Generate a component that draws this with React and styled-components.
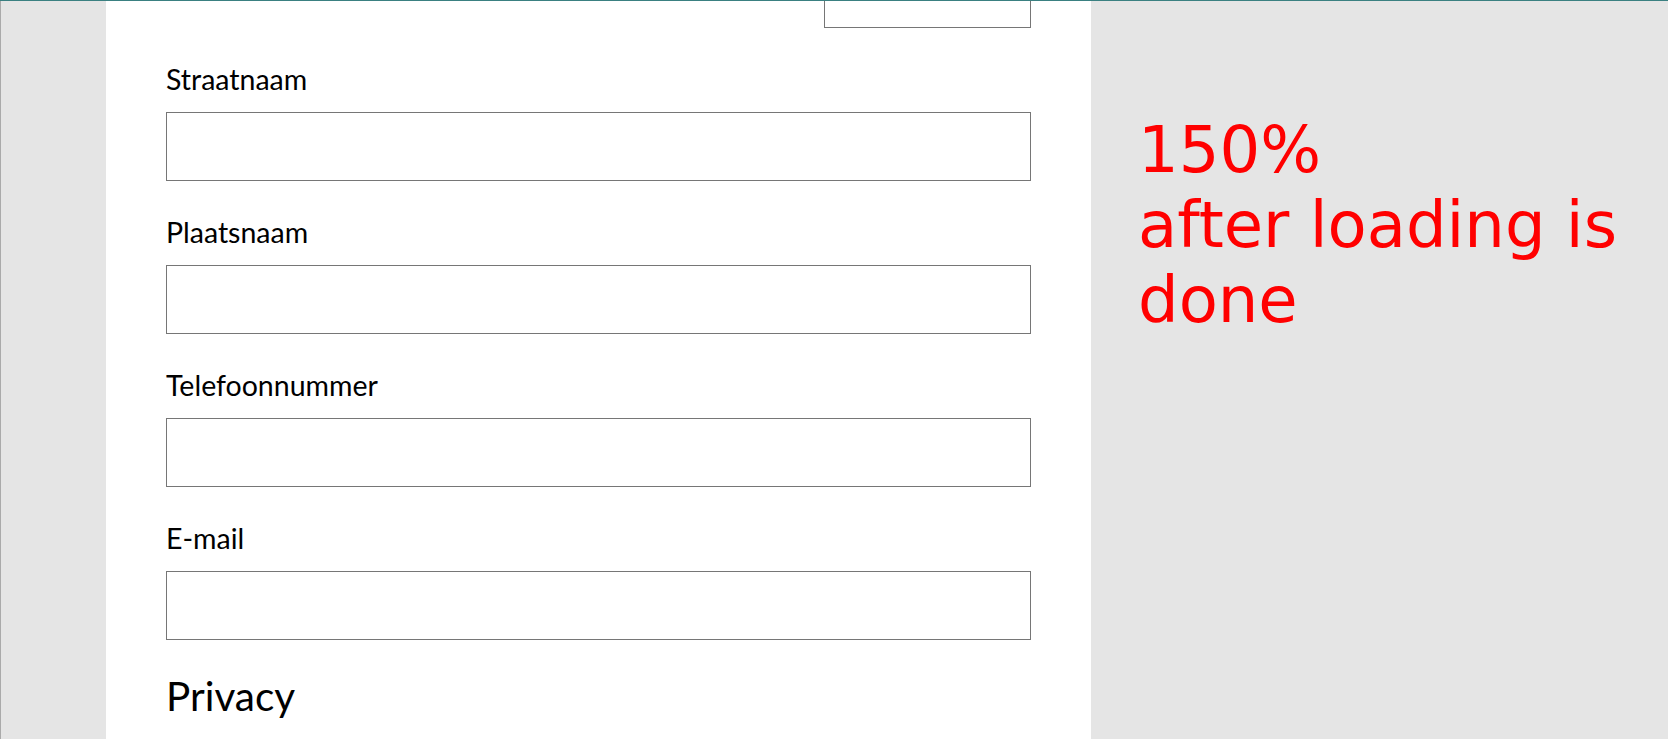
import React from 'react';
import styled, { createGlobalStyle } from 'styled-components';

const GlobalStyle = createGlobalStyle`
    html, body {
        margin: 0;
        padding: 0;
        height: 100%;
        overflow: hidden;
        background: #e5e5e5;
    }
`;

const Page = styled.div`
    display: flex;
    height: 100vh;
    box-sizing: border-box;
    border-top: 1px solid #3a8081;
    background: #e5e5e5;
`;

const Gutter = styled.div`
    width: 105px;
    flex-shrink: 0;
    border-left: 1px solid #aaaaaa;
`;

const Panel = styled.main`
    width: 985px;
    flex-shrink: 0;
    box-sizing: border-box;
    padding: 0 60px;
    background: #fff;
    overflow: hidden;
    font-family: Lato, "Noto Sans", sans-serif;
    color: #000;
`;

const Form = styled.form`
    display: flex;
    flex-direction: column;
    margin-top: -42px;
`;

const Field = styled.div`
    display: flex;
    flex-direction: column;
    align-items: ${(p) => (p.small ? 'flex-end' : 'stretch')};
    margin-bottom: 30px;
`;

const Label = styled.label`
    display: block;
    font-size: 28.5px;
    line-height: 42px;
    margin-bottom: 12px;
`;

const Input = styled.input`
    display: block;
    box-sizing: border-box;
    width: ${(p) => (p.small ? '207px' : '100%')};
    height: 69px;
    margin: 0;
    border: 1px solid #767676;
    border-radius: 0;
    background: #fff;
    outline: none;
`;

const Heading = styled.h2`
    margin: 2px 0 0;
    font-size: 40.5px;
    font-weight: 400;
    line-height: 48px;
`;

const Aside = styled.aside`
    flex: 1;
    box-sizing: border-box;
    padding: 112px 30px 0 47px;
`;

const Notice = styled.p`
    margin: 0;
    font-family: "DejaVu Sans", sans-serif;
    font-size: 64px;
    line-height: 75px;
    color: #ff0000;
`;

const fields = ['Straatnaam', 'Plaatsnaam', 'Telefoonnummer', 'E-mail'];

const App = () => (
    <>
        <GlobalStyle />
        <Page>
            <Gutter />
            <Panel>
                <Form>
                    <Field small>
                        <Input small type="text" />
                    </Field>
                    {fields.map((name) => (
                        <Field key={name}>
                            <Label>{name}</Label>
                            <Input type="text" />
                        </Field>
                    ))}
                    <Heading>{'Privacy'}</Heading>
                </Form>
            </Panel>
            <Aside>
                <Notice>
                    {'150%'}
                    <br />
                    {'after loading is done'}
                </Notice>
            </Aside>
        </Page>
    </>
);

export default App;
